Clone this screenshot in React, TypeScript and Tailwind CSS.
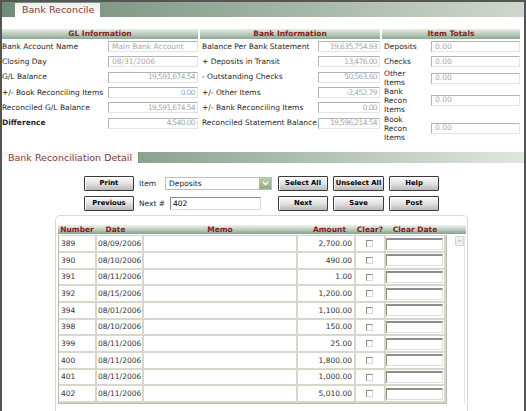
import React from "react";

const gl = [
  { label: "Bank Account Name", value: "Main Bank Account", left: true },
  { label: "Closing Day", value: "08/31/2006", left: true },
  { label: "G/L Balance", value: "19,591,674.54" },
  { label: "+/- Book Reconciling Items", value: "0.00" },
  { label: "Reconciled G/L Balance", value: "19,591,674.54" },
  { label: "Difference", value: "4,540.00", bold: true },
];

const bank = [
  ["Balance Per Bank Statement", "19,635,754.93"],
  ["+ Deposits in Transit", "13,476.00"],
  ["- Outstanding Checks", "50,563.60"],
  ["+/- Other Items", "-2,452.79"],
  ["+/- Bank Reconciling Items", "0.00"],
  ["Reconciled Statement Balance", "19,596,214.54"],
];

const rows = [
  ["389", "08/09/2006", "2,700.00"],
  ["390", "08/10/2006", "490.00"],
  ["391", "08/11/2006", "1.00"],
  ["392", "08/15/2006", "1,200.00"],
  ["394", "08/01/2006", "1,100.00"],
  ["398", "08/10/2006", "150.00"],
  ["399", "08/11/2006", "25.00"],
  ["400", "08/11/2006", "1,800.00"],
  ["401", "08/11/2006", "1,000.00"],
  ["402", "08/11/2006", "5,010.00"],
];

function TopInput({ value, left, w }: { value: string; left?: boolean; w: string }) {
  return (
    <div
      className={`${w} h-[11px] bg-white border border-t-[#b3b3b3] border-l-[#b3b3b3] border-r-[#e4e4e4] border-b-[#e4e4e4] flex items-center text-[7.5px] leading-none text-[#a8a8a8] whitespace-nowrap overflow-hidden ${
        left ? "justify-start pl-[3px]" : "justify-end pr-[2px] tracking-[-0.6px]"
      }`}
    >
      {value}
    </div>
  );
}

function SectionHeader({ title }: { title: string }) {
  return (
    <div className="h-[10px] bg-linear-to-b from-[#e8eee6] via-[#bccbbd] to-[#8ea693] flex items-center justify-center text-[7.5px] leading-none font-bold text-[#8b1a1a]">
      {title}
    </div>
  );
}

function Btn({ children }: { children: React.ReactNode }) {
  return (
    <div className="h-[15px] border border-[#3b3b3b] rounded-[1px] bg-linear-to-b from-[#fcfcfc] via-[#e2e2e2] to-[#b9b9b9] shadow-[inset_1px_1px_0_#ffffff] flex items-center justify-center text-[6.8px] leading-none font-bold text-black whitespace-nowrap">
      {children}
    </div>
  );
}

export default function App() {
  return (
    <div className="w-[526px] h-[411px] overflow-hidden bg-white border-x-2 border-t-2 border-[#555555] font-['DejaVu_Sans','Verdana',sans-serif] text-[#1f1f1f]">
      {/* top band */}
      <div className="h-[15px] bg-linear-to-r from-[#718b77] to-[#ced8cb] flex">
        <div className="ml-[13px] mt-[1px] w-[85px] h-[14px] bg-linear-to-b from-[#eef0ea] to-[#ffffff] flex items-center pl-[7px] text-[9.5px] leading-none text-[#7e3d3d]">
          Bank Reconcile
        </div>
      </div>

      {/* info columns */}
      <div className="mt-[12px] grid grid-cols-[196px_180px_138px] gap-x-[2px] items-start">
        <div>
          <SectionHeader title="GL Information" />
          {gl.map((r) => (
            <div key={r.label} className="h-[15.3px] flex items-center justify-between">
              <span className={`text-[7.5px] leading-none whitespace-nowrap ${r.bold ? "font-bold" : ""}`}>{r.label}</span>
              <TopInput value={r.value} left={r.left} w="w-[90px]" />
            </div>
          ))}
        </div>
        <div>
          <SectionHeader title="Bank Information" />
          {bank.map(([l, v]) => (
            <div key={l} className="h-[15.3px] flex items-center justify-between pl-[2px]">
              <span className="text-[7.5px] leading-none whitespace-nowrap">{l}</span>
              <TopInput value={v} w="w-[62px]" />
            </div>
          ))}
        </div>
        <div>
          <SectionHeader title="Item Totals" />
          {[
            { l: ["Deposits"], h: "h-[15.3px]" },
            { l: ["Checks"], h: "h-[15.3px]" },
            { l: ["Other", "Items"], h: "h-[17px]" },
            { l: ["Bank", "Recon", "Items"], h: "h-[27px]" },
            { l: ["Book", "Recon", "Items"], h: "h-[29px]" },
          ].map((r, i) => (
            <div key={i} className={`${r.h} flex items-center pl-[2px]`}>
              <div className="w-[47px] text-[7.5px] leading-[9px]">
                {r.l.map((t) => (
                  <div key={t}>{t}</div>
                ))}
              </div>
              <TopInput value="0.00" left w="w-[89px]" />
            </div>
          ))}
        </div>
      </div>

      {/* second band */}
      <div className="mt-[9.4px] h-[11px] flex">
        <div className="w-[137px] h-full bg-linear-to-b from-[#f3f4f0] to-[#ffffff] border-r border-[#7e9182] flex items-center pl-[6px] text-[9.5px] leading-none text-[#7e3d3d] whitespace-nowrap">
          Bank Reconciliation Detail
        </div>
        <div className="flex-1 h-full bg-linear-to-r from-[#8aa38f] to-[#e0e7dd]" />
      </div>

      {/* toolbar */}
      <div className="mt-[13px] ml-[82px] grid grid-cols-[50px_134px_50px_51px_50px] gap-x-[5px] gap-y-[5px] auto-rows-[15px] items-center">
        <Btn>Print</Btn>
        <div className="flex items-center h-[15px]">
          <span className="w-[26px] text-[7.5px] leading-none">Item</span>
          <div className="w-[107px] h-[13px] border border-[#b7c6aa] bg-white flex items-stretch">
            <span className="flex-1 pl-[3px] flex items-center text-[7.5px] leading-none text-[#222]">Deposits</span>
            <div className="w-[12px] bg-linear-to-b from-[#bccfb0] to-[#90ab84] flex items-center justify-center">
              <svg width="7" height="5" viewBox="0 0 7 5">
                <path d="M1 1 L3.5 3.6 L6 1" stroke="#ffffff" strokeWidth="1.4" fill="none" />
              </svg>
            </div>
          </div>
        </div>
        <Btn>Select All</Btn>
        <Btn>Unselect All</Btn>
        <Btn>Help</Btn>
        <Btn>Previous</Btn>
        <div className="flex items-center h-[15px]">
          <span className="w-[31px] text-[7.5px] leading-none whitespace-nowrap">Next #</span>
          <div className="w-[91px] h-[13px] bg-white border border-t-[#8a8a8a] border-l-[#8a8a8a] border-r-[#dcdcdc] border-b-[#dcdcdc] flex items-center pl-[2px] text-[7.5px] leading-none text-black">
            402
          </div>
        </div>
        <Btn>Next</Btn>
        <Btn>Save</Btn>
        <Btn>Post</Btn>
      </div>

      {/* detail table container */}
      <div className="mt-[4px] ml-[53px] w-[413px] h-[220px] border border-[#dadad0] rounded-t-[5px] pt-[9px] pl-[2px] pr-[1px]">
        <div className="h-[9px] bg-linear-to-b from-[#eef3ec] via-[#bfd0c1] to-[#86a08c] grid grid-cols-[36px_45px_152px_56px_28px_58px] gap-x-[2px] pl-[1px] text-[7.5px] leading-none font-bold text-[#8b1a1a] items-center">
          <div className="text-center">Number</div>
          <div className="text-center pr-[8px]">Date</div>
          <div className="text-center">Memo</div>
          <div className="text-center pl-[7px]">Amount</div>
          <div className="text-center whitespace-nowrap">Clear?</div>
          <div className="text-center whitespace-nowrap">Clear Date</div>
        </div>
        <div className="mt-[1.5px] flex items-stretch">
          <div className="w-[389px] border-l border-r border-b border-[#bcb8ac] bg-[#d9d6cb] pt-[1px] pr-[2px] pb-[2px]">
            <div className="grid grid-cols-[36px_45px_152px_56px_28px_58px] gap-[2px] auto-rows-[14.67px] text-[7.5px] leading-none text-[#333333]">
              {rows.map(([n, d, a]) => (
                <React.Fragment key={n}>
                  <div className="bg-white flex items-center pl-[2px]">{n}</div>
                  <div className="bg-white flex items-center pl-[1px] whitespace-nowrap">{d}</div>
                  <div className="bg-white" />
                  <div className="bg-white flex items-center justify-end pr-[2px]">{a}</div>
                  <div className="bg-white flex items-center justify-center pr-[2px]">
                    <div className="w-[7px] h-[7px] bg-white border border-t-[#8c8c8c] border-l-[#8c8c8c] border-r-[#d8d8d8] border-b-[#d8d8d8]" />
                  </div>
                  <div className="bg-white flex items-center">
                    <div className="w-[57px] h-[12px] bg-white border-t-2 border-l border-r border-b border-t-[#8e8e8e] border-l-[#8e8e8e] border-r-[#e0e0e0] border-b-[#e0e0e0]" />
                  </div>
                </React.Fragment>
              ))}
            </div>
          </div>
          <div className="w-[18px] border-r border-[#e6e6de] pt-[1px] pl-[8px]">
            <div className="w-[9px] h-[10px] bg-[#f1f1ec] border border-[#d6d6ce] rounded-[1px] flex items-center justify-center">
              <svg width="5" height="4" viewBox="0 0 5 4">
                <path d="M0.5 3 L2.5 1 L4.5 3" stroke="#b0b0a8" strokeWidth="1" fill="none" />
              </svg>
            </div>
          </div>
        </div>
      </div>
    </div>
  );
}
